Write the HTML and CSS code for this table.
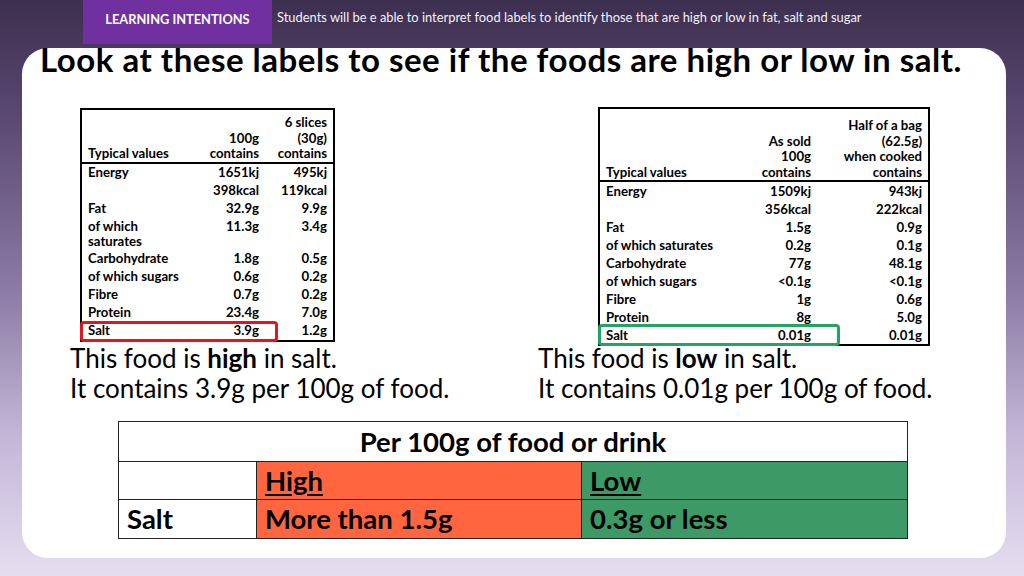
FILE: index.html
```html
<!DOCTYPE html>
<html>
<head>
<meta charset="utf-8">
<link rel="stylesheet" href="styles.css">
</head>
<body>
<div class="slide">
  <header class="topbar">
    <div class="tab">LEARNING INTENTIONS</div>
    <div class="intent">Students will be e able to interpret food labels to identify those that are high or low in fat, salt and sugar</div>
  </header>
  <main class="panel">
    <h1 class="title">Look at these labels to see if the foods are high or low in salt.</h1>
    <div class="labels">
      <section class="food food-left">
        <div class="label-wrap label-wrap-left">
          <table class="nut nut-left">
            <colgroup><col class="k1"><col class="k2"><col class="k3"></colgroup>
            <thead>
              <tr><th class="c1">Typical values</th><th class="c2">100g<br>contains</th><th class="c3">6 slices<br>(30g)<br>contains</th></tr>
            </thead>
            <tbody>
              <tr><td>Energy</td><td class="n">1651kj</td><td class="n">495kj</td></tr>
              <tr><td></td><td class="n">398kcal</td><td class="n">119kcal</td></tr>
              <tr><td>Fat</td><td class="n">32.9g</td><td class="n">9.9g</td></tr>
              <tr class="two"><td>of which<br>saturates</td><td class="n">11.3g</td><td class="n">3.4g</td></tr>
              <tr><td>Carbohydrate</td><td class="n">1.8g</td><td class="n">0.5g</td></tr>
              <tr><td>of which sugars</td><td class="n">0.6g</td><td class="n">0.2g</td></tr>
              <tr><td>Fibre</td><td class="n">0.7g</td><td class="n">0.2g</td></tr>
              <tr><td>Protein</td><td class="n">23.4g</td><td class="n">7.0g</td></tr>
              <tr><td>Salt</td><td class="n">3.9g</td><td class="n">1.2g</td></tr>
            </tbody>
          </table>
          <div class="mark mark-high"></div>
        </div>
        <p class="verdict verdict-left">This food is <b>high</b> in salt.<br>It contains 3.9g per 100g of food.</p>
      </section>
      <section class="food food-right">
        <div class="label-wrap label-wrap-right">
          <table class="nut nut-right">
            <colgroup><col class="k1"><col class="k2"><col class="k3"></colgroup>
            <thead>
              <tr><th class="c1">Typical values</th><th class="c2">As sold<br>100g<br>contains</th><th class="c3">Half of a bag<br>(62.5g)<br>when cooked<br>contains</th></tr>
            </thead>
            <tbody>
              <tr><td>Energy</td><td class="n">1509kj</td><td class="n">943kj</td></tr>
              <tr><td></td><td class="n">356kcal</td><td class="n">222kcal</td></tr>
              <tr><td>Fat</td><td class="n">1.5g</td><td class="n">0.9g</td></tr>
              <tr><td>of which saturates</td><td class="n">0.2g</td><td class="n">0.1g</td></tr>
              <tr><td>Carbohydrate</td><td class="n">77g</td><td class="n">48.1g</td></tr>
              <tr><td>of which sugars</td><td class="n">&lt;0.1g</td><td class="n">&lt;0.1g</td></tr>
              <tr><td>Fibre</td><td class="n">1g</td><td class="n">0.6g</td></tr>
              <tr><td>Protein</td><td class="n">8g</td><td class="n">5.0g</td></tr>
              <tr><td>Salt</td><td class="n">0.01g</td><td class="n">0.01g</td></tr>
            </tbody>
          </table>
          <div class="mark mark-low"></div>
        </div>
        <p class="verdict verdict-right">This food is <b>low</b> in salt.<br>It contains 0.01g per 100g of food.</p>
      </section>
    </div>
    <table class="guide">
      <colgroup><col class="gk1"><col class="gk2"><col class="gk3"></colgroup>
      <tr><th colspan="3" class="guide-head">Per 100g of food or drink</th></tr>
      <tr class="gr2"><td class="g1"></td><td class="high"><u>High</u></td><td class="low"><u>Low</u></td></tr>
      <tr class="gr3"><td class="g1">Salt</td><td class="high">More than 1.5g</td><td class="low">0.3g or less</td></tr>
    </table>
  </main>
</div>
</body>
</html>
```

FILE: styles.css
```css
html, body {
  margin: 0;
  padding: 0;
}
body {
  font-family: Lato, "Open Sans", sans-serif;
}
.slide {
  width: 1024px;
  height: 576px;
  overflow: hidden;
  background: linear-gradient(180deg, #3d2f4f 0%, #5a4870 20%, #8b7aa3 50%, #c2b5d6 75%, #e6def0 100%);
  display: flex;
  flex-direction: column;
}
.topbar {
  display: flex;
  align-items: stretch;
  height: 44px;
  padding-left: 83px;
}
.tab {
  width: 189px;
  background: #7030a0;
  color: #fff;
  font-weight: 700;
  font-size: 12.8px;
  display: flex;
  align-items: center;
  justify-content: center;
  padding-bottom: 7px;
  box-sizing: border-box;
}
.intent {
  color: #f4f0f8;
  font-size: 12.9px;
  padding: 9px 0 0 5px;
}
.panel {
  margin: 4px 18px 0 22px;
  height: 510px;
  background: #fff;
  border-radius: 26px;
  box-sizing: border-box;
  padding: 0 0 0 18px;
  display: flex;
  flex-direction: column;
}
.title {
  margin: 0;
  font-size: 33px;
  font-weight: 700;
  color: #000;
  line-height: 22px;
  padding-top: 0;
  letter-spacing: 0.52px;
  white-space: nowrap;
}
.labels {
  display: flex;
  margin-top: 38px;
  padding-left: 30px;
}
.food {
  display: flex;
  flex-direction: column;
}
.food-left {
  width: 468px;
}
.food-right {
  margin-top: -1px;
}
.label-wrap {
  position: relative;
  align-self: flex-start;
}
.label-wrap-left {
  margin-left: 10px;
}
.label-wrap-right {
  margin-left: 60px;
}
.nut {
  border-collapse: collapse;
  table-layout: fixed;
  border: 2px solid #000;
  font-size: 13.2px;
  font-weight: 700;
  color: #000;
}
.nut th {
  font-weight: 700;
  vertical-align: bottom;
  line-height: 15.5px;
  padding: 0 6px 0 6px;
  border-bottom: 2px solid #000;
}
.nut th.c1 { text-align: left; }
.nut th.c2, .nut th.c3 { text-align: right; }
.nut td {
  height: 18px;
  padding: 0 6px;
  line-height: 15px;
  vertical-align: middle;
  white-space: nowrap;
}
.nut td.n { text-align: right; }
.nut tr.two td { height: 31px; vertical-align: top; padding-top: 1px; }
.nut-left { width: 253px; }
.nut-left .k1 { width: 120px; }
.nut-left .k2 { width: 64px; }
.nut-left .k3 { width: 69px; }
.nut-left thead th { padding-top: 5px; padding-bottom: 0; }
.nut-right { width: 330px; }
.nut-right .k1 { width: 150px; }
.nut-right .k2 { width: 68px; }
.nut-right .k3 { width: 112px; }
.nut-right thead th { padding-top: 9px; }
.mark {
  position: absolute;
  border-radius: 4px;
  box-sizing: border-box;
}
.mark-high {
  left: 0;
  bottom: 0;
  width: 198px;
  height: 21px;
  border: 3px solid #e3161f;
}
.mark-low {
  left: 0;
  bottom: 0;
  width: 242px;
  height: 22px;
  border: 3px solid #22a560;
}
.verdict {
  margin: 1px 0 0 0;
  font-size: 26px;
  line-height: 30px;
  color: #000;
  white-space: nowrap;
}
.verdict-right { margin-top: -3px; }
.verdict b { font-weight: 700; }
.guide {
  margin: 18px 0 0 78px;
  width: 789px;
  table-layout: fixed;
  border-collapse: collapse;
  font-size: 27.5px;
  font-weight: 700;
  color: #000;
}
.guide .gk1 { width: 138px; }
.guide .gk2 { width: 325px; }
.guide .gk3 { width: 326px; }
.guide th, .guide td {
  border: 1px solid #222;
  text-align: left;
  padding: 0 0 0 8px;
  line-height: 30px;
}
.guide th.guide-head {
  text-align: center;
  height: 39px;
  background: #fff;
  padding: 0;
}
.guide .gr2 td { height: 37px; }
.guide .gr3 td { height: 38px; }
.guide .g1 { background: #fff; }
.guide .high { background: #ff6640; }
.guide .low { background: #3d9966; }
.guide u { text-decoration-thickness: 2px; text-underline-offset: 3px; }
```
